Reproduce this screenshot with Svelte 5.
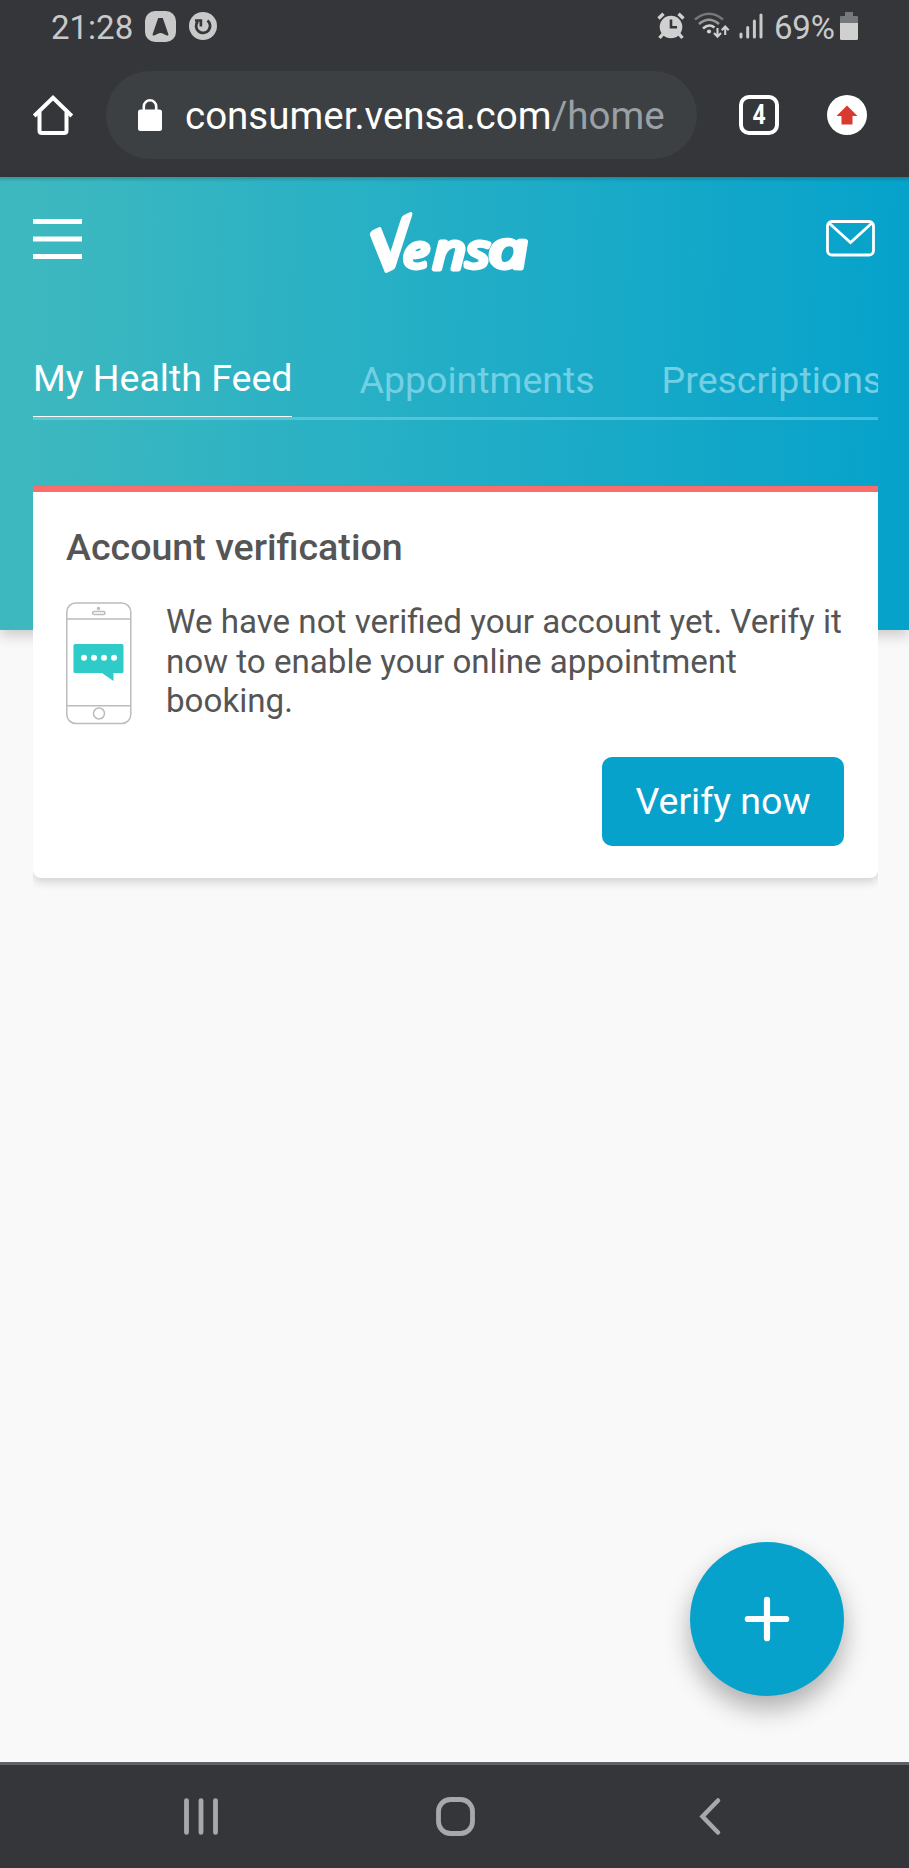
<script lang="ts">
	interface Tab {
		label: string;
		active?: boolean;
	}

	const tabs: Tab[] = [
		{ label: 'My Health Feed', active: true },
		{ label: 'Appointments' },
		{ label: 'Prescriptions' }
	];
</script>

<div class="screen">
	<div class="status">
		<span class="time">21:28</span>
		<svg class="app-icon" width="31" height="31" viewBox="0 0 31 31">
			<rect width="31" height="31" rx="10" fill="#c9c9ca" />
			<path
				d="M13.2 7h4.6l5.6 16.2q.4 1.8-1.6 1.3l-3.1-1.6q-3.2-1.6-6.4 0l-3.1 1.6q-2 .5-1.6-1.3z"
				fill="#35363a"
			/>
		</svg>
		<svg width="28" height="28" viewBox="0 0 28 28">
			<circle cx="14" cy="14" r="14" fill="#c9c9ca" />
			<path d="M18.5 8.5A7 7 0 1 1 8.7 9.5" fill="none" stroke="#35363a" stroke-width="2.8" />
			<path d="M6 7.2h7.2v7.2h-2.7V9.8H6z" fill="#35363a" />
		</svg>
		<div class="status-right">
			<svg width="28" height="28" viewBox="0 0 28 28" fill="none" stroke="#d0d0d1">
				<circle cx="14" cy="15" r="11.3" fill="#d0d0d1" stroke="none" />
				<path d="M1.5 6.5L6.5 1.8M26.5 6.5L21.5 1.8" stroke-width="3.4" />
				<path d="M6 22l-3.5 4M22 22l3.5 4" stroke-width="3.4" />
				<path d="M14 7.5v7.8h6" stroke="#35363a" stroke-width="2.6" />
			</svg>
			<svg class="wifi" width="36" height="28" viewBox="0 0 36 28" fill="none" stroke-width="2.6">
				<path d="M1 7.5Q15 -4 29 7.5" stroke="#77787b" />
				<path d="M5 12Q15 3.5 25 12" stroke="#97989a" />
				<path d="M9 16.5Q15 11 20.5 15.5" stroke="#d0d0d1" />
				<circle cx="15" cy="19.5" r="2.1" fill="#d0d0d1" />
				<path
					d="M23.5 16v8M20 21l3.5 3.7L27 21M31.2 23v-8M27.7 18.2l3.5-3.7 3.5 3.7"
					stroke="#d0d0d1"
					stroke-width="2.1"
				/>
			</svg>
			<svg
				class="signal"
				width="24"
				height="26"
				viewBox="0 0 24 26"
				stroke="#c9c9ca"
				stroke-width="3"
				stroke-linecap="round"
			>
				<path d="M2 21v3M8.7 14.5V24M15.4 8V24M22 2V24" />
			</svg>
			<span class="percent">69%</span>
			<svg class="battery" width="18" height="28" viewBox="0 0 18 28">
				<path d="M5 0h8v4h4q1 0 1 1v6H0V5q0-1 1-1h4z" fill="#77787b" />
				<path d="M0 11h18v15.5q0 1.5-1.5 1.5h-15Q0 28 0 26.5z" fill="#d0d0d1" />
			</svg>
		</div>
	</div>

	<div class="browser">
		<svg class="home" width="40" height="41" viewBox="0 0 40 41" fill="none" stroke="#fff" stroke-width="4">
			<path d="M1.2 21L20 2.9 38.8 21" />
			<path d="M6.5 17v18.5q0 2.5 2.5 2.5h22q2.5 0 2.5-2.5V17" />
		</svg>
		<div class="url">
			<svg width="24" height="32" viewBox="0 0 24 32">
				<rect y="10.5" width="24" height="21.5" rx="2.5" fill="#fff" />
				<path d="M5.8 12V7.5a6.2 6.2 0 0 1 12.4 0V12" fill="none" stroke="#fff" stroke-width="2.6" />
			</svg>
			<span class="address">consumer.vensa.com<span class="path">/home</span></span>
		</div>
		<div class="tab-count"><span>4</span></div>
		<svg class="update" width="40" height="40" viewBox="0 0 40 40">
			<circle cx="20" cy="20" r="20" fill="#fff" />
			<path d="M20 10.5l10.500 10.500h-5v8.500h-11V21h-5z" fill="#d93a2f" />
		</svg>
	</div>

	<header>
		<div class="topbar">
			<svg class="menu" width="49" height="41" viewBox="0 0 49 41" fill="#fff">
				<path d="M0 0h49v5H0zM0 17.500h49v5H0zM0 35h49v5H0z" />
			</svg>
			<svg class="logo" width="170" height="76" viewBox="0 0 170 76" fill="#fff" stroke="#fff" stroke-linejoin="round">
				<text font-size="70" stroke-width="7" transform="matrix(0.87 -0.42 -0.02 0.88 3 73)">V</text>
				<text class="slanted" stroke-width="5.5" transform="translate(0 64) scale(1 0.87)">
					<tspan x="34" y="0" font-size="53">e</tspan><tspan x="64" y="1" font-size="57">n</tspan><tspan x="97" y="0" font-size="55">s</tspan>
				</text>
				<text class="slanted" font-size="56" stroke-width="5.5" transform="matrix(1.25 0.04 0.12 0.9 121 63)">a</text>
			</svg>
			<svg class="mail" width="49" height="37" viewBox="0 0 49 37" fill="none" stroke="#fff" stroke-width="2.8">
				<rect x="1.5" y="1.5" width="46" height="33.5" rx="4.5" />
				<path d="M3 3L24.5 22.5 46 3" />
			</svg>
		</div>
		<nav>
			{#each tabs as tab}
				<span class="tab" class:active={tab.active}>{tab.label}</span>
			{/each}
		</nav>
	</header>

	<main>
		<section class="card">
			<h2>Account verification</h2>
			<div class="message">
				<svg width="66" height="123" viewBox="0 0 66 123" fill="none" stroke="#bcbcbc" stroke-width="1.5">
					<rect x=".8" y="1" width="64" height="120.5" rx="9" />
					<path d="M1 17h64M1 103.800h64" />
					<circle cx="33" cy="111.5" r="5.5" />
					<rect x="26.5" y="9.5" width="12.5" height="3" rx="1.5" />
					<circle cx="32.5" cy="6.5" r="1" />
					<path
						d="M9 42h47q1.500 0 1.500 1.500V69.500q0 1.500-1.500 1.500h-8.500v8L36 71H9q-1.500 0-1.500-1.500v-26Q7.500 42 9 42z"
						fill="#2fcbc8"
						stroke="none"
					/>
					<g fill="#fff" stroke="none">
						<circle cx="18" cy="55.8" r="3" />
						<circle cx="28" cy="55.8" r="3" />
						<circle cx="38" cy="55.8" r="3" />
						<circle cx="48" cy="55.8" r="3" />
					</g>
				</svg>
				<p>We have not verified your account yet. Verify it now to enable your online appointment booking.</p>
			</div>
			<button>Verify now</button>
		</section>
	</main>

	<button class="fab" aria-label="Add">
		<svg width="46" height="46" viewBox="0 0 46 46" stroke="#fff" stroke-width="6.2" stroke-linecap="round">
			<path d="M23 3.800v38.400M3.800 23h38.400" />
		</svg>
	</button>

	<footer>
		<svg width="34" height="37" viewBox="0 0 34 37" stroke="#a7a8ac" stroke-width="4.800" stroke-linecap="round">
			<path d="M2.500 2.600v31.800M17 2.600v31.800M31.500 2.600v31.800" />
		</svg>
		<svg class="home-key" width="39" height="39" viewBox="0 0 39 39" fill="none" stroke="#a7a8ac" stroke-width="4.8">
			<rect x="2.5" y="2.5" width="34" height="34" rx="12" />
		</svg>
		<svg width="22" height="37" viewBox="0 0 22 37" fill="none" stroke="#a7a8ac" stroke-width="4.500" stroke-linecap="round">
			<path d="M19 2.500L3.500 18.500 19 34.500" />
		</svg>
	</footer>
</div>

<style>
	:global(body) {
		margin: 0;
	}

	.screen {
		position: relative;
		display: flex;
		flex-direction: column;
		width: 909px;
		height: 1868px;
		overflow: hidden;
		background: #f9f9f9;
		font-family: Roboto, sans-serif;
	}

	svg {
		display: block;
		flex: none;
		overflow: visible;
	}

	.status {
		display: flex;
		align-items: center;
		height: 52px;
		padding: 0 51px;
		background: #35363a;
		color: #c9c9ca;
		font-size: 33px;
	}

	.time {
		width: 94px;
		padding-top: 3px;
	}

	.app-icon {
		margin-right: 13px;
	}

	.status-right {
		display: flex;
		align-items: center;
		margin-left: auto;
	}

	.wifi {
		margin-left: 9px;
	}

	.signal {
		margin-left: 9px;
	}

	.percent {
		width: 61px;
		margin-left: 11px;
		padding-top: 3px;
		letter-spacing: -0.2px;
	}

	.battery {
		margin-left: 5px;
	}

	.browser {
		display: flex;
		align-items: center;
		height: 125px;
		padding: 1px 42px 0 33px;
		box-sizing: border-box;
		background: #35363a;
	}

	.url {
		display: flex;
		align-items: center;
		gap: 23px;
		width: 591px;
		height: 88px;
		margin-left: 33px;
		padding-left: 32px;
		box-sizing: border-box;
		border-radius: 44px;
		background: #3c4043;
	}

	.address {
		color: #fff;
		font-size: 38.5px;
		white-space: nowrap;
	}

	.path {
		color: #9aa0a6;
	}

	.tab-count {
		width: 40px;
		height: 40px;
		margin-left: 42px;
		box-sizing: border-box;
		border: 4px solid #fff;
		border-radius: 10px;
		color: #fff;
		font-size: 27px;
		font-weight: 700;
		line-height: 32px;
		text-align: center;
	}

	.tab-count span {
		display: block;
		transform: scaleX(0.85);
	}

	.update {
		margin-left: auto;
	}

	header {
		height: 453px;
		flex: none;
		padding: 0 31px 0 33px;
		box-sizing: border-box;
		background: linear-gradient(rgba(0, 0, 0, 0.18), transparent 5px),
			linear-gradient(92deg, #3db8bf 4%, #28b0c5 40%, #06a2cb 99%);
		box-shadow: 0 5px 14px rgba(0, 0, 0, 0.2);
	}

	.topbar {
		display: flex;
		align-items: flex-start;
		justify-content: space-between;
		height: 163px;
		padding: 27px 3px 0 0;
		box-sizing: border-box;
	}

	.menu {
		margin-top: 15px;
	}

	.logo {
		font-family: 'Open Sans', sans-serif;
	}

	.slanted {
		font-style: italic;
	}

	.mail {
		margin-top: 16px;
	}

	nav {
		display: flex;
		gap: 67px;
		height: 80px;
		box-sizing: border-box;
		border-bottom: 3px solid rgba(125, 220, 235, 0.5);
		overflow: hidden;
	}

	.tab {
		height: 78px;
		padding-top: 18px;
		box-sizing: border-box;
		color: #73d0e4;
		font-size: 37.5px;
		line-height: 44px;
		white-space: nowrap;
	}

	.tab.active {
		padding-top: 16px;
		border-bottom: 2px solid #fff;
		color: #fff;
	}

	main {
		height: 430px;
		margin: -144px 31px 0 33px;
		overflow: hidden;
	}

	.card {
		display: flex;
		flex-direction: column;
		height: 392px;
		padding: 32px 34px 32px 33px;
		box-sizing: border-box;
		border-top: 6px solid #f96e6b;
		border-radius: 0 0 8px 8px;
		background: #fff;
		box-shadow: 0 4px 10px rgba(0, 0, 0, 0.16);
	}

	h2 {
		margin: 0;
		color: #555;
		font-size: 37.6px;
		font-weight: 500;
		line-height: 46px;
	}

	.message {
		display: flex;
		margin-top: 32px;
	}

	p {
		width: 690px;
		margin: 0 -10px 0 34px;
		color: #555;
		font-size: 33.15px;
		line-height: 39.6px;
	}

	.card button {
		align-self: flex-end;
		width: 242px;
		height: 89px;
		margin-top: auto;
		padding: 0 0 2px;
		border: 0;
		border-radius: 10px;
		background: #07a2cb;
		color: #fff;
		font-family: inherit;
		font-size: 37.5px;
	}

	.fab {
		position: absolute;
		right: 65px;
		bottom: 172px;
		display: flex;
		align-items: center;
		justify-content: center;
		width: 154px;
		height: 154px;
		padding: 0;
		border: 0;
		border-radius: 50%;
		background: #07a2cb;
		box-shadow: 0 13px 26px rgba(0, 0, 0, 0.3);
	}

	footer {
		display: flex;
		align-items: center;
		justify-content: space-between;
		height: 106px;
		margin-top: auto;
		padding: 0 188px 0 184px;
		box-sizing: border-box;
		border-top: 3px solid #5f6165;
		background: #35363a;
	}

	.home-key {
		margin-right: 7px;
	}
</style>
